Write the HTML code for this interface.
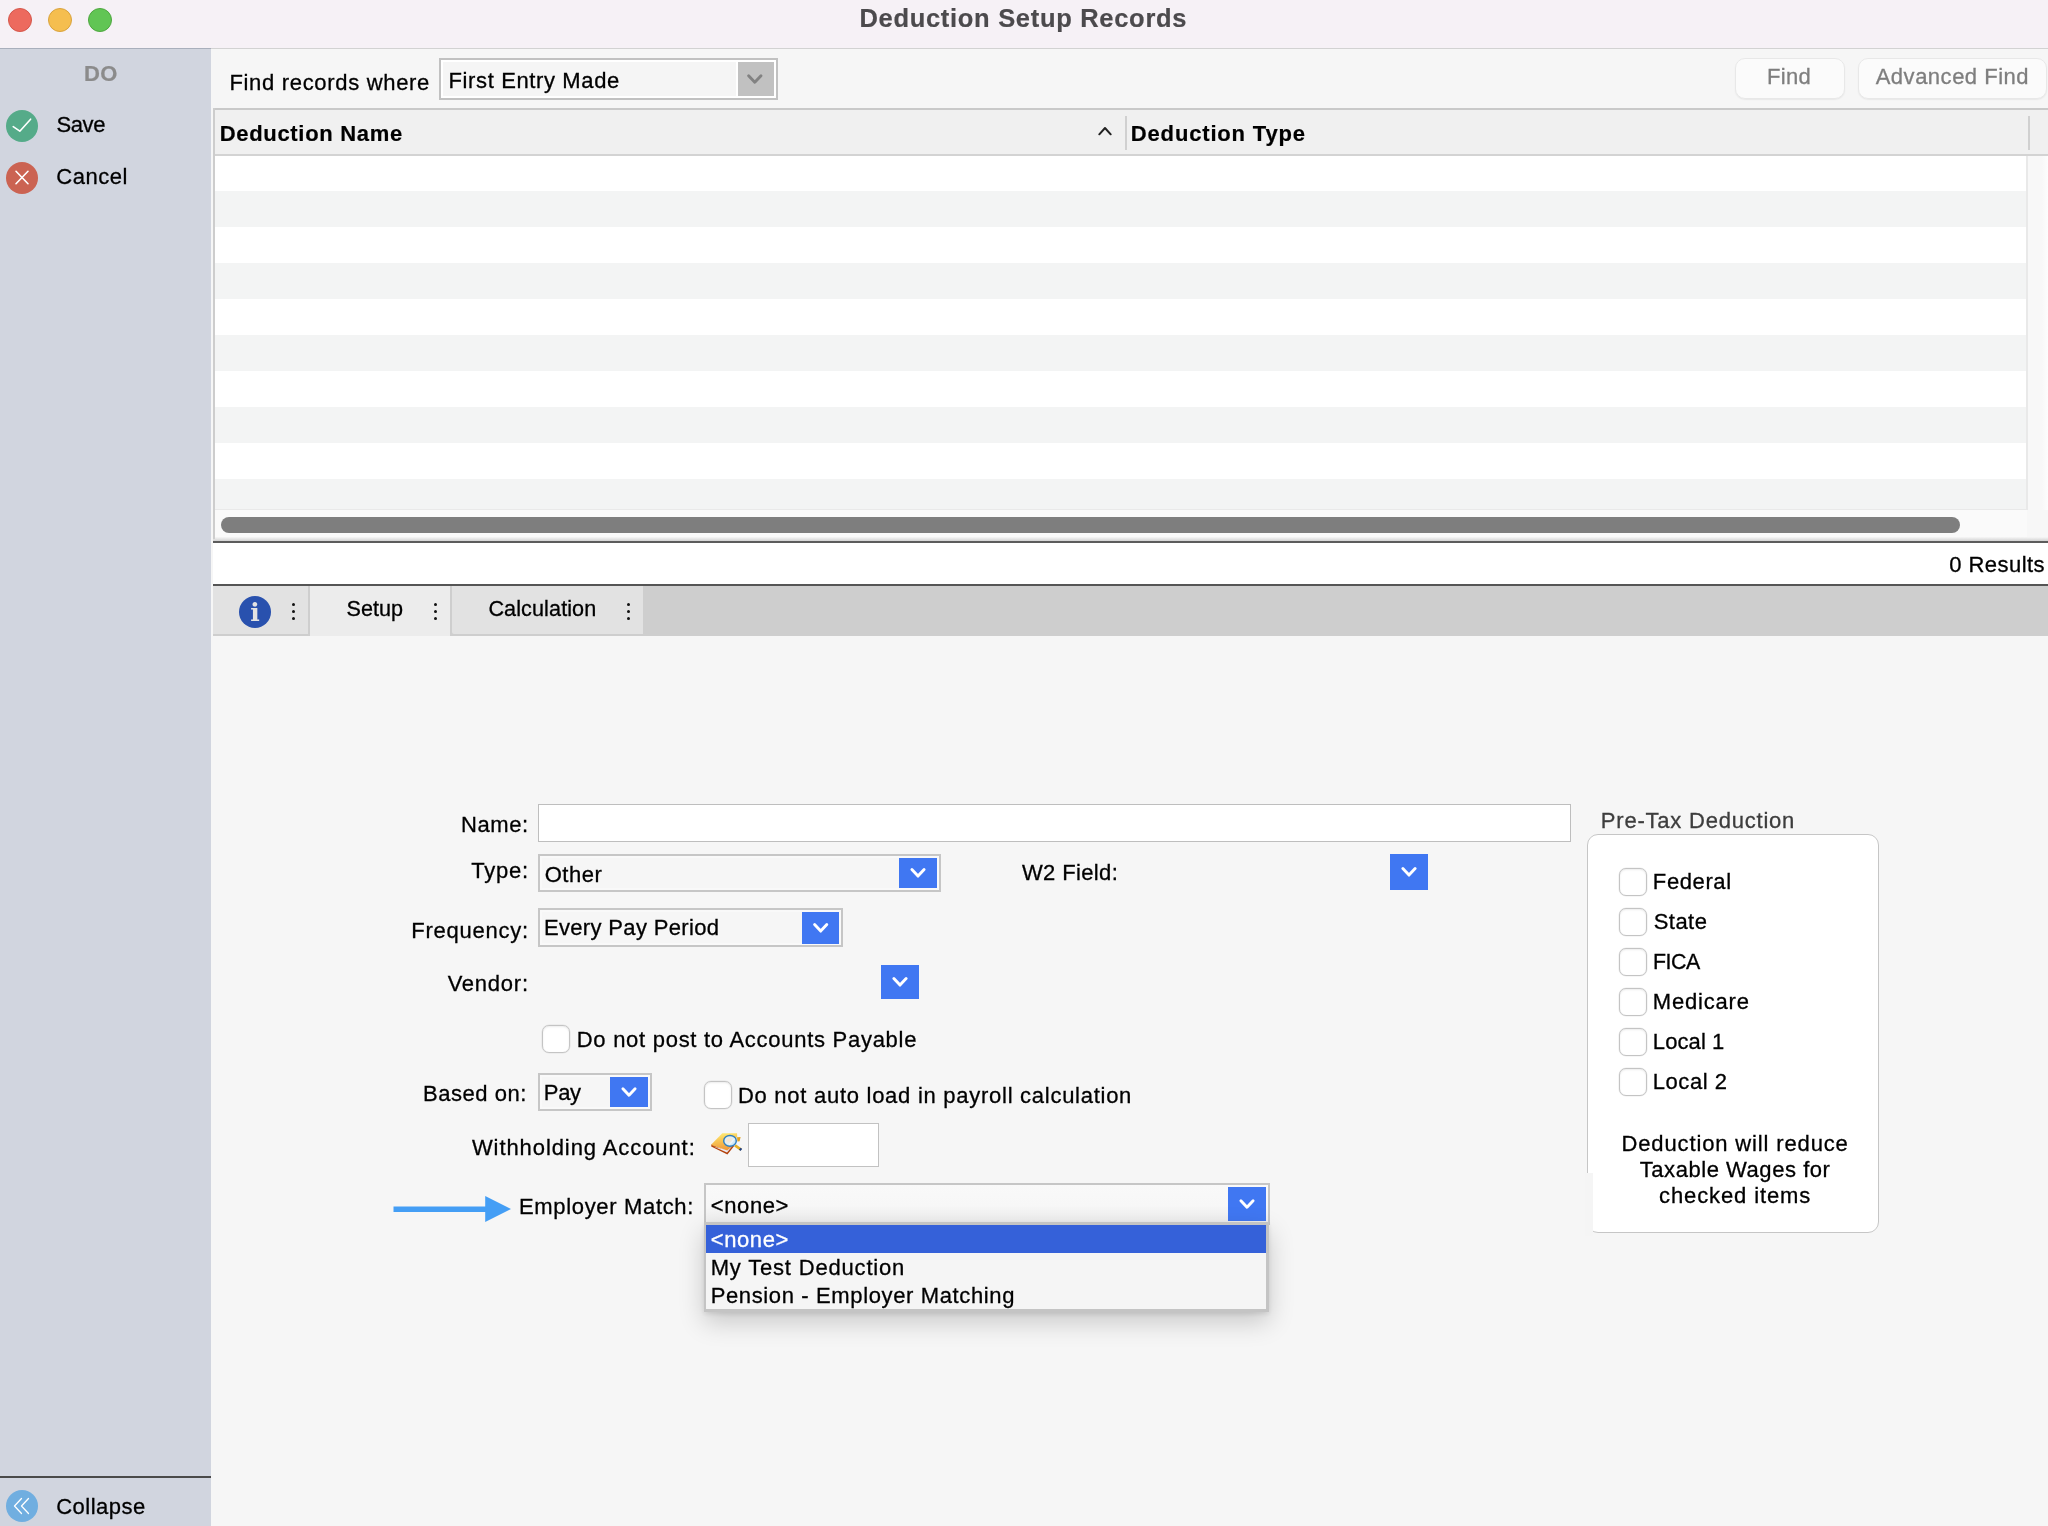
<!DOCTYPE html>
<html lang="en"><head><meta charset="utf-8"><title>Deduction Setup Records</title>
<style>
html,body{margin:0;padding:0}
body{width:2048px;height:1526px;position:relative;overflow:hidden;background:#f6f6f6;font-family:"Liberation Sans",sans-serif;}
#root{position:absolute;left:0;top:0;width:2048px;height:1526px;will-change:transform;-webkit-font-smoothing:antialiased}
.a{position:absolute;box-sizing:border-box}
.t{position:absolute;white-space:nowrap;line-height:1;font-family:"Liberation Sans",sans-serif;-webkit-text-stroke:0.3px currentColor}
.sel{position:absolute;box-sizing:border-box;border:2px solid #c6c6c6;background:#f6f6f6;box-shadow:inset 0 0 0 2px #f9f9f9}
.bb{position:absolute;background:#4077f2}
.cb{position:absolute;box-sizing:border-box;border:1px solid #c4c4c4;border-radius:7px;background:#fff;box-shadow:inset 0 1px 2px rgba(0,0,0,.08),0 0 0 0.6px rgba(0,0,0,.07)}
svg{position:absolute;overflow:visible}
</style></head>
<body>
<div id="root">
<div class="a" style="left:0px;top:0px;width:2048px;height:48px;background:#f6f1f6"></div>
<div class="a" style="left:0px;top:48px;width:2048px;height:1px;background:#d2d2d2"></div>
<div class="a" style="left:0px;top:48px;width:211px;height:1px;background:#a9afbc"></div>
<div class="a" style="left:8px;top:7.5px;width:24px;height:24.0px;border-radius:50%;background:#ed6a5e;border:1px solid #d5574b"></div>
<div class="a" style="left:48px;top:7.5px;width:24px;height:24.0px;border-radius:50%;background:#f5be4f;border:1px solid #d9a33d"></div>
<div class="a" style="left:88px;top:7.5px;width:24px;height:24.0px;border-radius:50%;background:#61c554;border:1px solid #4ea73f"></div>
<span class="t" style="left:859.45px;top:6.2px;font-size:25.5px;letter-spacing:0.696px;color:#4c4a4d;font-weight:bold;-webkit-text-stroke:0.2px currentColor;">Deduction Setup Records</span>
<div class="a" style="left:0px;top:49px;width:211px;height:1477px;background:#d1d5df"></div>
<span class="t" style="left:83.92px;top:62.9px;font-size:22px;letter-spacing:0.432px;color:#8b8b8b;font-weight:bold;-webkit-text-stroke:0.2px currentColor;">DO</span>
<div class="a" style="left:6px;top:110px;width:32px;height:32px;border-radius:50%;background:#55ab89"></div>
<svg style="left:0;top:0" width="1" height="1"><path d="M13.2 126.6 L19.8 131.2 L30.6 119.2" fill="none" stroke="#fff" stroke-width="1.6" stroke-linecap="round" stroke-linejoin="round"/></svg>
<span class="t" style="left:56.38px;top:114.4px;font-size:22px;letter-spacing:-0.341px;color:#000;">Save</span>
<div class="a" style="left:6px;top:161.5px;width:32px;height:32.0px;border-radius:50%;background:#cb6352"></div>
<svg style="left:0;top:0" width="1" height="1"><path d="M16 171.3 L28 183.7 M28 171.3 L16 183.7" fill="none" stroke="#fff" stroke-width="1.6" stroke-linecap="round"/></svg>
<span class="t" style="left:56.27px;top:166.2px;font-size:22px;letter-spacing:0.544px;color:#000;">Cancel</span>
<div class="a" style="left:0px;top:1476px;width:211px;height:2px;background:#4a4a4a"></div>
<div class="a" style="left:6px;top:1490px;width:32px;height:32px;border-radius:50%;background:#70aee0"></div>
<svg style="left:0;top:0" width="1" height="1"><path d="M21.5 1498.5 L14.5 1506 L21.5 1513.5 M28.5 1498.5 L21.5 1506 L28.5 1513.5" fill="none" stroke="#fff" stroke-width="1.3" stroke-linecap="round" stroke-linejoin="round"/></svg>
<span class="t" style="left:56.24px;top:1495.7px;font-size:22px;letter-spacing:0.485px;color:#000;">Collapse</span>
<span class="t" style="left:229.42px;top:71.8px;font-size:22px;letter-spacing:0.683px;color:#000;">Find records where</span>
<div class="sel" style="left:439px;top:58px;width:339px;height:42px;border-color:#c1c1c1;background:#f5f5f5;box-shadow:inset 0 0 0 2px #fff"></div>
<div class="a" style="left:736px;top:62px;width:2px;height:34px;background:#fff"></div>
<span class="t" style="left:448.52px;top:70.3px;font-size:22px;letter-spacing:0.623px;color:#000;">First Entry Made</span>
<div class="a" style="left:738px;top:62px;width:36px;height:34px;background:#c1c1c1"></div>
<svg style="left:0;top:0" width="1" height="1"><path d="M748.6 75.7 L754.8 82.3 L761.0 75.7" fill="none" stroke="#828282" stroke-width="2.9" stroke-linecap="round" stroke-linejoin="round"/></svg>
<div class="a" style="left:1735px;top:58px;width:110px;height:41px;background:#fbfbfb;border:1px solid #e8e8e8;border-radius:10px;box-shadow:0 1px 1.5px rgba(0,0,0,.06)"></div>
<span class="t" style="left:1767.03px;top:66.4px;font-size:22px;letter-spacing:0.317px;color:#7e7e7e;">Find</span>
<div class="a" style="left:1858px;top:58px;width:189px;height:41px;background:#fbfbfb;border:1px solid #e8e8e8;border-radius:10px;box-shadow:0 1px 1.5px rgba(0,0,0,.06)"></div>
<span class="t" style="left:1875.69px;top:66.4px;font-size:22px;letter-spacing:0.510px;color:#7e7e7e;">Advanced Find</span>
<div class="a" style="left:213px;top:108px;width:1835px;height:2px;background:#c9c9c9"></div>
<div class="a" style="left:213px;top:110px;width:1835px;height:44px;background:#f0f0f0"></div>
<div class="a" style="left:215px;top:155px;width:1811px;height:36px;background:#ffffff"></div>
<div class="a" style="left:215px;top:191px;width:1811px;height:36px;background:#f3f4f4"></div>
<div class="a" style="left:215px;top:227px;width:1811px;height:36px;background:#ffffff"></div>
<div class="a" style="left:215px;top:263px;width:1811px;height:36px;background:#f3f4f4"></div>
<div class="a" style="left:215px;top:299px;width:1811px;height:36px;background:#ffffff"></div>
<div class="a" style="left:215px;top:335px;width:1811px;height:36px;background:#f3f4f4"></div>
<div class="a" style="left:215px;top:371px;width:1811px;height:36px;background:#ffffff"></div>
<div class="a" style="left:215px;top:407px;width:1811px;height:36px;background:#f3f4f4"></div>
<div class="a" style="left:215px;top:443px;width:1811px;height:36px;background:#ffffff"></div>
<div class="a" style="left:215px;top:479px;width:1811px;height:30px;background:#f3f4f4"></div>
<div class="a" style="left:213px;top:154px;width:1835px;height:2px;background:#d3d3d3"></div>
<div class="a" style="left:213px;top:108px;width:2px;height:433px;background:#c9c9c9"></div>
<div class="a" style="left:2026px;top:156px;width:22px;height:385px;background:linear-gradient(to right,#f8f8f8 70%,#fdfdfd);border-left:2px solid #e9e9e9"></div>
<div class="a" style="left:215px;top:509px;width:1812px;height:32px;background:#fafafa;border-top:1px solid #e9e9e9"></div>
<div class="a" style="left:2027px;top:510px;width:21px;height:31px;background:#f7f7f7"></div>
<div class="a" style="left:221px;top:517px;width:1739px;height:16px;background:#7e7e7e;border-radius:8px"></div>
<span class="t" style="left:219.78px;top:122.9px;font-size:22px;letter-spacing:0.674px;color:#000;font-weight:bold;-webkit-text-stroke:0.2px currentColor;">Deduction Name</span>
<span class="t" style="left:1130.84px;top:123.2px;font-size:22px;letter-spacing:0.835px;color:#000;font-weight:bold;-webkit-text-stroke:0.2px currentColor;">Deduction Type</span>
<div class="a" style="left:1125px;top:116px;width:2px;height:34px;background:#d0d0d0"></div>
<div class="a" style="left:2028px;top:116px;width:2px;height:34px;background:#d0d0d0"></div>
<svg style="left:0;top:0" width="1" height="1"><path d="M1099.3 134.3 L1105 128 L1110.7 134.3" fill="none" stroke="#222" stroke-width="2" stroke-linecap="round" stroke-linejoin="round"/></svg>
<div class="a" style="left:213px;top:537px;width:1835px;height:4px;background:linear-gradient(#f7f7f7,#d2d2d2)"></div>
<div class="a" style="left:213px;top:108px;width:2px;height:431px;background:#cdcdcd"></div>
<div class="a" style="left:213px;top:540.5px;width:1835px;height:2.0px;background:#5c5c5c"></div>
<div class="a" style="left:213px;top:542.5px;width:1835px;height:42.5px;background:#fff"></div>
<span class="t" style="left:1949.18px;top:554.3px;font-size:22px;letter-spacing:0.459px;color:#000;">0 Results</span>
<div class="a" style="left:213px;top:584px;width:1835px;height:2px;background:#555"></div>
<div class="a" style="left:213px;top:586px;width:1835px;height:50px;background:#cecece"></div>
<div class="a" style="left:213px;top:586.4px;width:95px;height:47.60000000000002px;background:#e2e2e2"></div>
<div class="a" style="left:310px;top:586.4px;width:140px;height:49.60000000000002px;background:#ececec"></div>
<div class="a" style="left:452px;top:586.4px;width:191px;height:47.60000000000002px;background:#e2e2e2;border-bottom-left-radius:2px"></div>
<div class="a" style="left:239px;top:596px;width:32px;height:32px;border-radius:50%;background:#2951ae"></div>
<span class="t" style="left:245px;top:599.9px;width:20px;text-align:center;font-size:25px;font-weight:bold;color:#e3e3e3;font-family:'DejaVu Serif','Liberation Serif',serif;-webkit-text-stroke:0">i</span>
<div class="a" style="left:291.5px;top:602.8px;width:3.0px;height:3.0px;background:#111;border-radius:50%"></div>
<div class="a" style="left:291.5px;top:610.0px;width:3.0px;height:3.0px;background:#111;border-radius:50%"></div>
<div class="a" style="left:291.5px;top:617.4px;width:3.0px;height:3.0px;background:#111;border-radius:50%"></div>
<div class="a" style="left:434.3px;top:602.8px;width:3.0px;height:3.0px;background:#111;border-radius:50%"></div>
<div class="a" style="left:434.3px;top:610.0px;width:3.0px;height:3.0px;background:#111;border-radius:50%"></div>
<div class="a" style="left:434.3px;top:617.4px;width:3.0px;height:3.0px;background:#111;border-radius:50%"></div>
<div class="a" style="left:626.9px;top:602.8px;width:3.0px;height:3.0px;background:#111;border-radius:50%"></div>
<div class="a" style="left:626.9px;top:610.0px;width:3.0px;height:3.0px;background:#111;border-radius:50%"></div>
<div class="a" style="left:626.9px;top:617.4px;width:3.0px;height:3.0px;background:#111;border-radius:50%"></div>
<span class="t" style="left:346.54px;top:598.1px;font-size:21.6px;letter-spacing:0.025px;color:#000;">Setup</span>
<span class="t" style="left:488.43px;top:598.1px;font-size:21.6px;letter-spacing:0.099px;color:#000;">Calculation</span>
<span class="t" style="left:461.02px;top:813.7px;font-size:22px;letter-spacing:0.559px;color:#000;">Name:</span>
<div class="a" style="left:538px;top:804px;width:1033px;height:38px;background:#fff;border:1.5px solid #bebebe"></div>
<span class="t" style="left:471.24px;top:860.1px;font-size:22px;letter-spacing:0.754px;color:#000;">Type:</span>
<div class="sel" style="left:538px;top:854px;width:403px;height:38px;"></div>
<span class="t" style="left:544.69px;top:863.9px;font-size:22px;letter-spacing:0.502px;color:#000;">Other</span>
<div class="bb" style="left:899px;top:858px;width:38px;height:30px;"></div>
<svg style="left:0;top:0" width="1" height="1"><path d="M911.9 869.6 L918.0 876.1 L924.1 869.6" fill="none" stroke="#fff" stroke-width="2.9" stroke-linecap="round" stroke-linejoin="round"/></svg>
<span class="t" style="left:1021.94px;top:861.7px;font-size:22px;letter-spacing:0.366px;color:#000;">W2 Field:</span>
<div class="bb" style="left:1390px;top:854px;width:38px;height:36px;"></div>
<svg style="left:0;top:0" width="1" height="1"><path d="M1402.9 868.6 L1409.0 875.1 L1415.1 868.6" fill="none" stroke="#fff" stroke-width="2.9" stroke-linecap="round" stroke-linejoin="round"/></svg>
<span class="t" style="left:411.22px;top:920.2px;font-size:22px;letter-spacing:0.754px;color:#000;">Frequency:</span>
<div class="sel" style="left:538px;top:908px;width:305.4px;height:39px;"></div>
<span class="t" style="left:543.92px;top:917.2px;font-size:22px;letter-spacing:0.347px;color:#000;">Every Pay Period</span>
<div class="bb" style="left:802px;top:912px;width:37.39999999999998px;height:32px;"></div>
<svg style="left:0;top:0" width="1" height="1"><path d="M814.6 924.6 L820.7 931.1 L826.8 924.6" fill="none" stroke="#fff" stroke-width="2.9" stroke-linecap="round" stroke-linejoin="round"/></svg>
<span class="t" style="left:447.64px;top:973.2px;font-size:22px;letter-spacing:0.766px;color:#000;">Vendor:</span>
<div class="bb" style="left:881px;top:965px;width:38px;height:34px;"></div>
<svg style="left:0;top:0" width="1" height="1"><path d="M893.9 978.6 L900.0 985.1 L906.1 978.6" fill="none" stroke="#fff" stroke-width="2.9" stroke-linecap="round" stroke-linejoin="round"/></svg>
<div class="cb" style="left:542px;top:1025px;width:27.600000000000023px;height:27.59999999999991px;"></div>
<span class="t" style="left:576.72px;top:1029.4px;font-size:22px;letter-spacing:0.724px;color:#000;">Do not post to Accounts Payable</span>
<span class="t" style="left:422.92px;top:1082.6px;font-size:22px;letter-spacing:0.545px;color:#000;">Based on:</span>
<div class="sel" style="left:538px;top:1073px;width:114px;height:38px;"></div>
<span class="t" style="left:543.85px;top:1082.0px;font-size:22px;letter-spacing:-0.329px;color:#000;">Pay</span>
<div class="bb" style="left:610px;top:1077px;width:38px;height:30px;"></div>
<svg style="left:0;top:0" width="1" height="1"><path d="M622.9 1088.7 L629.0 1095.2 L635.1 1088.7" fill="none" stroke="#fff" stroke-width="2.9" stroke-linecap="round" stroke-linejoin="round"/></svg>
<div class="cb" style="left:704px;top:1081px;width:27.600000000000023px;height:27.59999999999991px;"></div>
<span class="t" style="left:737.92px;top:1085.4px;font-size:22px;letter-spacing:0.731px;color:#000;">Do not auto load in payroll calculation</span>
<span class="t" style="left:471.94px;top:1136.6px;font-size:22px;letter-spacing:0.914px;color:#000;">Withholding Account:</span>
<div class="a" style="left:748px;top:1123px;width:131px;height:44px;background:#fff;border:1.5px solid #c2c2c2"></div>
<svg style="left:0;top:0" width="1" height="1"><path d="M393.5 1206.5 H485.2 V1196.1 L511 1209.1 L485.2 1222.1 V1211.9 H393.5 Z" fill="#449ef5"/></svg>
<span class="t" style="left:519.02px;top:1196.4px;font-size:22px;letter-spacing:0.663px;color:#000;">Employer Match:</span>
<div class="sel" style="left:704px;top:1183px;width:566px;height:42px;background:linear-gradient(#f9f9f9,#f7f7f7 55%,#eeeeee);box-shadow:none"></div>
<span class="t" style="left:710.77px;top:1195.0px;font-size:22px;letter-spacing:0.598px;color:#000;">&lt;none&gt;</span>
<div class="bb" style="left:1228px;top:1187px;width:38px;height:34px;"></div>
<svg style="left:0;top:0" width="1" height="1"><path d="M1240.9 1200.7 L1247.0 1207.2 L1253.1 1200.7" fill="none" stroke="#fff" stroke-width="2.9" stroke-linecap="round" stroke-linejoin="round"/></svg>
<div class="a" style="left:704px;top:1222px;width:565px;height:90px;background:#f5f5f5;border:solid #c4c4c4;border-width:3px 3px 3px 2px;box-shadow:0 10px 24px rgba(0,0,0,.19),0 2px 5px rgba(0,0,0,.10)"></div>
<div class="a" style="left:706px;top:1225px;width:560px;height:28px;background:#3561d9"></div>
<span class="t" style="left:710.87px;top:1229.0px;font-size:22px;letter-spacing:0.558px;color:#fff;">&lt;none&gt;</span>
<span class="t" style="left:710.65px;top:1257.1px;font-size:22px;letter-spacing:0.822px;color:#000;">My Test Deduction</span>
<span class="t" style="left:710.65px;top:1284.9px;font-size:22px;letter-spacing:0.633px;color:#000;">Pension - Employer Matching</span>
<span class="t" style="left:1600.87px;top:809.8px;font-size:22px;letter-spacing:0.780px;color:#3d3d3d;">Pre-Tax Deduction</span>
<div class="a" style="left:1587px;top:834px;width:291.5px;height:398.5px;background:#fff;border:1.5px solid #c6c6c6;border-radius:11px"></div>
<div class="a" style="left:1585px;top:1172.5px;width:8px;height:63.5px;background:#f5f5f5"></div>
<div class="cb" style="left:1619px;top:868.0px;width:27.59999999999991px;height:27.600000000000023px;"></div>
<span class="t" style="left:1652.87px;top:871.4px;font-size:22px;letter-spacing:0.603px;color:#000;">Federal</span>
<div class="cb" style="left:1619px;top:908.0px;width:27.59999999999991px;height:27.600000000000023px;"></div>
<span class="t" style="left:1653.69px;top:911.3px;font-size:22px;letter-spacing:0.458px;color:#000;">State</span>
<div class="cb" style="left:1619px;top:948.0px;width:27.59999999999991px;height:27.600000000000023px;"></div>
<span class="t" style="left:1652.93px;top:951.8px;font-size:21.37px;letter-spacing:-0.448px;color:#000;">FICA</span>
<div class="cb" style="left:1619px;top:988.0px;width:27.59999999999991px;height:27.600000000000023px;"></div>
<span class="t" style="left:1652.87px;top:991.2px;font-size:22px;letter-spacing:0.804px;color:#000;">Medicare</span>
<div class="cb" style="left:1619px;top:1028.0px;width:27.59999999999991px;height:27.600000000000136px;"></div>
<span class="t" style="left:1652.87px;top:1031.2px;font-size:22px;letter-spacing:0.079px;color:#000;">Local 1</span>
<div class="cb" style="left:1619px;top:1068.0px;width:27.59999999999991px;height:27.600000000000136px;"></div>
<span class="t" style="left:1652.87px;top:1071.1px;font-size:22px;letter-spacing:0.520px;color:#000;">Local 2</span>
<span class="t" style="left:1621.53px;top:1132.7px;font-size:22px;letter-spacing:0.860px;color:#000;">Deduction will reduce</span>
<span class="t" style="left:1639.75px;top:1158.7px;font-size:22px;letter-spacing:0.549px;color:#000;">Taxable Wages for</span>
<span class="t" style="left:1659.11px;top:1184.5px;font-size:22px;letter-spacing:0.877px;color:#000;">checked items</span>
<svg style="left:0;top:0" width="1" height="1">
<defs>
<linearGradient id="bk" x1="0" y1="0" x2="0.25" y2="1"><stop offset="0" stop-color="#fff47c"/><stop offset="0.45" stop-color="#f9c856"/><stop offset="1" stop-color="#ef9a3c"/></linearGradient>
<radialGradient id="gl" cx="0.42" cy="0.42" r="0.6"><stop offset="0" stop-color="#fbe3c8"/><stop offset="0.55" stop-color="#e3eef2"/><stop offset="1" stop-color="#b9e0f6"/></radialGradient>
</defs>
<path d="M711.2 1146.6 L727.4 1154.6 L734 1146.3 L733.2 1144.2 L727 1151.6 L711.4 1144.2 Z" fill="#b4440e"/>
<path d="M713.5 1146.4 L727 1152.6 L732 1146.6 L727.2 1150.2 Z" fill="#eceaf4"/>
<path d="M722.3 1133.2 L737 1133.2 L737.2 1136.5 L733 1145.2 L727.2 1150.6 L711.4 1145 L712.5 1143.2 Z" fill="url(#bk)"/>
<path d="M737 1137.2 L740.6 1137 L739.6 1141.2 L737.4 1141.4 Z" fill="#e2a323"/>
<path d="M735 1145.4 L741 1149.6" stroke="#e7b024" stroke-width="2.6" stroke-linecap="butt"/>
<path d="M739.8 1148.6 L741.3 1150" stroke="#1d3f86" stroke-width="2.6"/>
<ellipse cx="730" cy="1140.9" rx="6.3" ry="5.4" fill="url(#gl)" stroke="#2f7dbd" stroke-width="1.4"/>
<path d="M729 1145 L734.6 1138.6" stroke="#f4fbff" stroke-width="1.1" opacity=".8"/>
</svg>
</div>
</body></html>
